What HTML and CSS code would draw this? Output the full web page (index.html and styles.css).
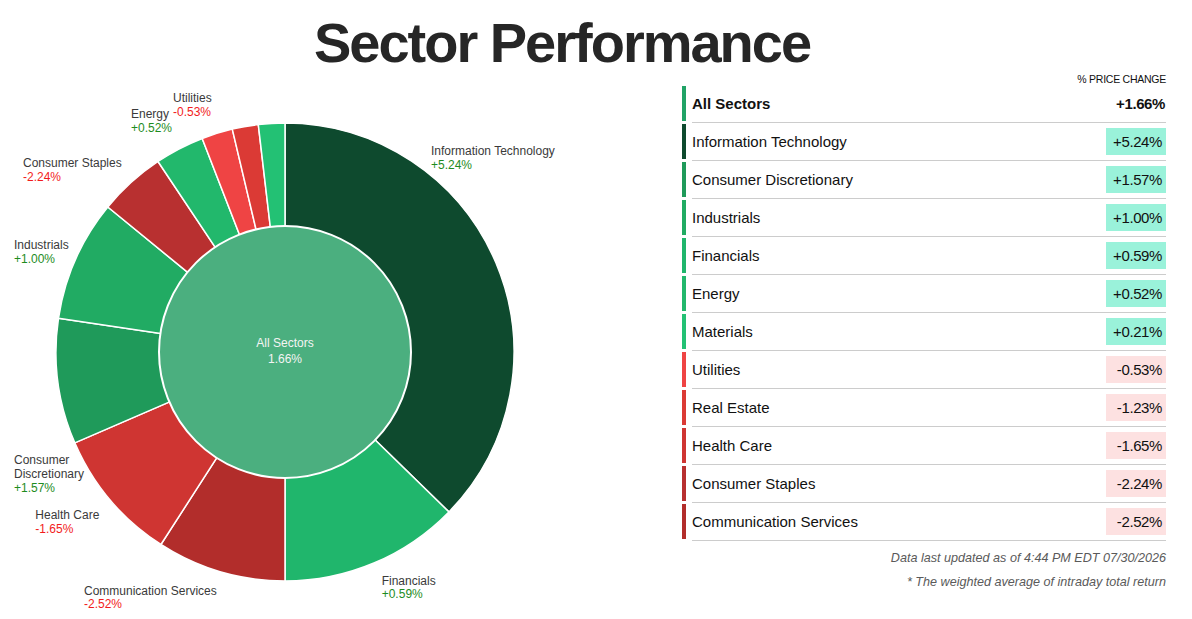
FILE: index.html
```html
<!DOCTYPE html>
<html lang="en">
<head>
<meta charset="utf-8">
<title>Sector Performance</title>
<link rel="stylesheet" href="styles.css">
</head>
<body>
<h1 class="title">Sector Performance</h1>
<div class="main">
  <svg class="chart" width="570" height="548" viewBox="0 71 570 548" xmlns="http://www.w3.org/2000/svg">
    <g class="slices">
      <path fill="#0e4a2e" d="M285 352 L285 123 A229 229 0 0 1 448.9 511.9 Z"/>
      <path fill="#20b66c" d="M285 352 L448.9 511.9 A229 229 0 0 1 285 581 Z"/>
      <path fill="#b22d2b" d="M285 352 L285 581 A229 229 0 0 1 160.9 544.5 Z"/>
      <path fill="#cf3532" d="M285 352 L160.9 544.5 A229 229 0 0 1 74.8 442.9 Z"/>
      <path fill="#1f9a5a" d="M285 352 L74.8 442.9 A229 229 0 0 1 58.5 318.2 Z"/>
      <path fill="#21ab63" d="M285 352 L58.5 318.2 A229 229 0 0 1 107.8 207 Z"/>
      <path fill="#b83030" d="M285 352 L107.8 207 A229 229 0 0 1 158 161.5 Z"/>
      <path fill="#22b86c" d="M285 352 L158 161.5 A229 229 0 0 1 202.2 138.5 Z"/>
      <path fill="#ef4444" d="M285 352 L202.2 138.5 A229 229 0 0 1 232.3 129.1 Z"/>
      <path fill="#db3a35" d="M285 352 L232.3 129.1 A229 229 0 0 1 258.3 124.6 Z"/>
      <path fill="#23c174" d="M285 352 L258.3 124.6 A229 229 0 0 1 285 123 Z"/>
    </g>
    <circle class="hub" cx="285" cy="352" r="126"/>
    <text class="hub-text" x="285" y="346.7">All Sectors</text>
    <text class="hub-text" x="285" y="362.7">1.66%</text>

    <text class="lbl" x="173" y="101.7">Utilities</text>
    <text class="neg" x="173" y="116">-0.53%</text>

    <text class="lbl" x="131" y="117.7">Energy</text>
    <text class="pos" x="131" y="131.7">+0.52%</text>

    <text class="lbl" x="23" y="166.7">Consumer Staples</text>
    <text class="neg" x="23" y="181">-2.24%</text>

    <text class="lbl" x="14" y="249.3">Industrials</text>
    <text class="pos" x="14" y="263.3">+1.00%</text>

    <text class="lbl" x="14" y="464.3">Consumer</text>
    <text class="lbl" x="14" y="478.3">Discretionary</text>
    <text class="pos" x="14" y="491.7">+1.57%</text>

    <text class="lbl" x="35.3" y="519.3">Health Care</text>
    <text class="neg" x="35.3" y="532.7">-1.65%</text>

    <text class="lbl" x="84" y="595">Communication Services</text>
    <text class="neg" x="84" y="608.3">-2.52%</text>

    <text class="lbl" x="381.7" y="585">Financials</text>
    <text class="pos" x="381.7" y="598.3">+0.59%</text>

    <text class="lbl" x="431" y="155">Information Technology</text>
    <text class="pos" x="431" y="169">+5.24%</text>
  </svg>

  <div class="table-col">
    <div class="head">% PRICE CHANGE</div>
    <div class="rows">
      <div class="row total">
        <span class="bar c-all"></span>
        <div class="cell"><span class="name">All Sectors</span><span class="val">+1.66%</span></div>
      </div>
      <div class="row">
        <span class="bar c-it"></span>
        <div class="cell"><span class="name">Information Technology</span><span class="val up">+5.24%</span></div>
      </div>
      <div class="row">
        <span class="bar c-cd"></span>
        <div class="cell"><span class="name">Consumer Discretionary</span><span class="val up">+1.57%</span></div>
      </div>
      <div class="row">
        <span class="bar c-ind"></span>
        <div class="cell"><span class="name">Industrials</span><span class="val up">+1.00%</span></div>
      </div>
      <div class="row">
        <span class="bar c-fin"></span>
        <div class="cell"><span class="name">Financials</span><span class="val up">+0.59%</span></div>
      </div>
      <div class="row">
        <span class="bar c-en"></span>
        <div class="cell"><span class="name">Energy</span><span class="val up">+0.52%</span></div>
      </div>
      <div class="row">
        <span class="bar c-mat"></span>
        <div class="cell"><span class="name">Materials</span><span class="val up">+0.21%</span></div>
      </div>
      <div class="row">
        <span class="bar c-ut"></span>
        <div class="cell"><span class="name">Utilities</span><span class="val down">-0.53%</span></div>
      </div>
      <div class="row">
        <span class="bar c-re"></span>
        <div class="cell"><span class="name">Real Estate</span><span class="val down">-1.23%</span></div>
      </div>
      <div class="row">
        <span class="bar c-hc"></span>
        <div class="cell"><span class="name">Health Care</span><span class="val down">-1.65%</span></div>
      </div>
      <div class="row">
        <span class="bar c-cs"></span>
        <div class="cell"><span class="name">Consumer Staples</span><span class="val down">-2.24%</span></div>
      </div>
      <div class="row">
        <span class="bar c-com"></span>
        <div class="cell"><span class="name">Communication Services</span><span class="val down">-2.52%</span></div>
      </div>
    </div>
    <p class="note">Data last updated as of 4:44 PM EDT 07/30/2026</p>
    <p class="note">* The weighted average of intraday total return</p>
  </div>
</div>
</body>
</html>
```
FILE: styles.css
```css
* { box-sizing: border-box; }

body {
  margin: 0;
  background: #ffffff;
  font-family: "Liberation Sans", Arial, sans-serif;
  color: #111;
}

.title {
  margin: 0;
  padding: 15px 68px 0 0;
  height: 71px;
  line-height: 56px;
  font-size: 56px;
  font-weight: bold;
  letter-spacing: -2px;
  text-align: center;
  color: #262626;
}

.main {
  display: flex;
  align-items: flex-start;
}

.chart {
  display: block;
  flex: none;
  font-family: "Liberation Sans", Arial, sans-serif;
}

.slices path {
  stroke: #ffffff;
  stroke-width: 1.5;
  stroke-linejoin: round;
}

.hub {
  fill: #4baf7f;
  stroke: #ffffff;
  stroke-width: 2;
}

.hub-text {
  fill: #f4f4f4;
  font-size: 12px;
  text-anchor: middle;
}

.lbl { fill: #3a3a3a; font-size: 12px; }
.pos { fill: #1e8c1e; font-size: 12px; }
.neg { fill: #f21c1c; font-size: 12px; }

.table-col {
  margin-left: 112px;
  width: 484px;
  flex: none;
}

.head {
  height: 14px;
  line-height: 16px;
  font-size: 10.5px;
  letter-spacing: -0.25px;
  text-align: right;
  padding-right: 0;
  color: #111;
}

.row {
  display: flex;
  height: 38px;
}

.bar {
  width: 4px;
  height: 35px;
  margin: 1px 6px 0 0;
  flex: none;
}

.cell {
  flex: 1;
  height: 38px;
  display: flex;
  align-items: center;
  justify-content: space-between;
  border-bottom: 1px solid #cccccc;
  font-size: 15px;
}

.val {
  width: 60px;
  height: 27px;
  line-height: 27px;
  text-align: right;
  padding-right: 4px;
  letter-spacing: -0.4px;
}

.total .name,
.total .val {
  font-weight: bold;
}
.total .val { padding-right: 1px; }

.up { background: #9af2da; }
.down { background: #fde1e1; }

.c-all { background: #21a366; }
.c-it { background: #0e4a2e; }
.c-cd { background: #1f9a5a; }
.c-ind { background: #21ab63; }
.c-fin { background: #20b66c; }
.c-en { background: #22b86c; }
.c-mat { background: #23c174; }
.c-ut { background: #ef4444; }
.c-re { background: #db3a35; }
.c-hc { background: #cf3532; }
.c-cs { background: #b83030; }
.c-com { background: #b22d2b; }

.note {
  margin: 0;
  padding-left: 10px;
  line-height: 24px;
  font-size: 12.6px;
  font-style: italic;
  color: #5a5a5a;
  text-align: right;
}
.rows + .note { margin-top: 5px; }
```
